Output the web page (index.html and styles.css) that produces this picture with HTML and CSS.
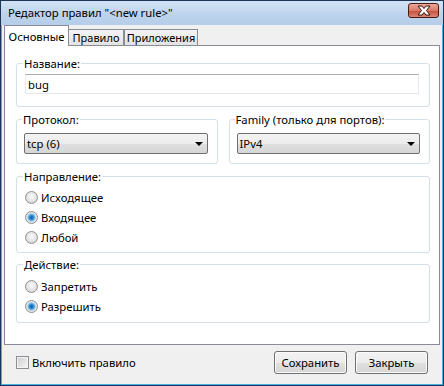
FILE: index.html
```html
<!DOCTYPE html>
<html lang="ru">
<head>
  <meta charset="UTF-8">
  <title>Редактор правил</title>
  <link rel="stylesheet" href="styles.css">
</head>
<body>
  <div class="window">
    <div class="titlebar">
      <span class="title">Редактор правил "&lt;new rule&gt;"</span>
      <button class="close" title="Закрыть">
        <svg width="16" height="11" viewBox="0 0 16 11">
          <path d="M2 1 H6 L8 3.5 L10 1 H14 L10.5 5.5 L14 10 H10 L8 7.5 L6 10 H2 L5.5 5.5 Z" fill="#fff" stroke="#3a1410" stroke-width="1" stroke-linejoin="round"/>
        </svg>
      </button>
    </div>

    <div class="client">
      <div class="tabs">
        <div class="tab active">Основные</div>
        <div class="tab tab-rule">Правило</div>
        <div class="tab tab-apps">Приложения</div>
      </div>

      <div class="panel">
        <fieldset class="group">
          <legend>Название:</legend>
          <input class="textbox" type="text" value="bug">
        </fieldset>

        <div class="row">
          <fieldset class="group half">
            <legend>Протокол:</legend>
            <div class="combo"><span>tcp (6)</span><i class="arrow"></i></div>
          </fieldset>
          <fieldset class="group half">
            <legend>Family (только для портов):</legend>
            <div class="combo"><span>IPv4</span><i class="arrow"></i></div>
          </fieldset>
        </div>

        <fieldset class="group options">
          <legend>Направление:</legend>
          <label class="option"><input type="radio" name="dir"> Исходящее</label>
          <label class="option"><input type="radio" name="dir" checked> Входящее</label>
          <label class="option"><input type="radio" name="dir"> Любой</label>
        </fieldset>

        <fieldset class="group options action">
          <legend>Действие:</legend>
          <label class="option"><input type="radio" name="act"> Запретить</label>
          <label class="option"><input type="radio" name="act" checked> Разрешить</label>
        </fieldset>
      </div>

      <div class="footer">
        <label class="check"><input type="checkbox"> Включить правило</label>
        <div class="buttons">
          <button class="btn">Сохранить</button>
          <button class="btn">Закрыть</button>
        </div>
      </div>
    </div>
  </div>
</body>
</html>
```

FILE: styles.css
```css
body {
  margin: 0;
  font-family: 'Segoe UI', 'Noto Sans', sans-serif;
  font-size: 11.3px;
  line-height: 15px;
  color: #000;
  background: #fff;
}
.window {
  width: 444px;
  height: 386px;
  box-sizing: border-box;
  border: 1px solid #1d3554;
  display: flex;
  flex-direction: column;
  background: #f0f0f0;
}
.titlebar {
  height: 24px;
  flex: none;
  display: flex;
  align-items: center;
  justify-content: space-between;
  padding: 0 4px 0 7px;
  background: linear-gradient(#d2e2f5, #bcd2ec 60%, #b6cdea);
}
.title {
  margin-top: -1px;
}
.close {
  width: 31px;
  height: 15px;
  margin-top: -6px;
  padding: 0;
  border: 1px solid #4a1a14;
  border-radius: 3px;
  background: linear-gradient(#eba999, #d97a68 50%, #c8513c 55%, #d9877a);
  display: flex;
  align-items: center;
  justify-content: center;
}
.client {
  flex: 1;
  display: flex;
  flex-direction: column;
  border: 1px solid #4ab0e6;
  border-top: none;
}
.tabs {
  height: 20px;
  flex: none;
  display: flex;
  align-items: flex-end;
  padding-left: 2px;
}
.tab {
  height: 15px;
  border: 1px solid #898c95;
  border-bottom: none;
  margin-right: -1px;
  background: linear-gradient(#f4f4f4, #e3e3e3);
  line-height: 15px;
  text-align: center;
  white-space: nowrap;
  font-size: 11px;
}
.tab.active {
  width: 63px;
  height: 20px;
  margin-right: -2px;
  margin-bottom: -1px;
  background: #fff;
  position: relative;
  z-index: 1;
  line-height: 21px;
  font-size: 11.3px;
}
.tab-rule {
  width: 54px;
  padding-left: 1px;
}
.tab-apps {
  width: 72px;
  margin-left: 1px;
}
.panel {
  flex: none;
  height: 288px;
  margin: 0 2px;
  padding: 10px 9px 0 11px;
  border: 1px solid #898c95;
  background: #fff;
}
.group {
  margin: 0 0 5px;
  padding: 0 10px 12px 8px;
  border: 1px solid #d5dfe5;
  border-radius: 3px;
  min-width: 0;
}
.group legend {
  margin-left: -2px;
  padding: 0 1px;
}
.textbox {
  display: block;
  width: 100%;
  height: 20px;
  margin-top: 3px;
  box-sizing: border-box;
  border: 1px solid #e3e9ef;
  border-top-color: #abadb3;
  padding: 0 2px;
  font: inherit;
  outline: none;
}
.row {
  display: flex;
  gap: 11px;
}
.half {
  flex: 1;
  padding: 0 9px 9px 7px;
}
.combo {
  height: 19px;
  margin-top: 6px;
  border: 1px solid #707070;
  border-radius: 2px;
  background: linear-gradient(#f3f3f3, #ececec 50%, #e0e0e0 51%, #d6d6d6);
  display: flex;
  align-items: center;
  justify-content: space-between;
  padding: 0 4px 0 2px;
}
.arrow {
  width: 0;
  height: 0;
  border-left: 4px solid transparent;
  border-right: 4px solid transparent;
  border-top: 4px solid #000;
}
.options {
  padding-bottom: 5px;
  margin-bottom: 4px;
}
.option {
  display: flex;
  align-items: center;
  height: 20px;
}
.options legend + .option {
  margin-top: 3px;
}
.action {
  padding-bottom: 6px;
}
.action legend + .option {
  margin-top: 4px;
}
input[type=radio] {
  appearance: none;
  width: 13px;
  height: 13px;
  margin: 0 3px 0 0;
  border: 1px solid #8c8f94;
  border-radius: 50%;
  box-sizing: border-box;
  background: radial-gradient(circle at 50% 40%, #fafafa, #dcdcdc 70%, #cfcfcf);
}
input[type=radio]:checked {
  background: radial-gradient(circle, #1b5b92 0, #2e86cf 2px, #7cc2f0 3.5px, #e2e2e2 4.5px, #f3f3f3);
}
.footer {
  flex: 1;
  display: flex;
  align-items: center;
  justify-content: space-between;
  padding: 0 14px 4px 14px;
}
.check {
  display: flex;
  align-items: center;
}
input[type=checkbox] {
  appearance: none;
  width: 13px;
  height: 13px;
  margin: 0 3px 0 0;
  border: 1px solid #8c8f94;
  box-sizing: border-box;
  background: linear-gradient(135deg, #cdcdcd, #f7f7f7);
  box-shadow: inset 0 0 0 1px #f4f4f4;
}
.buttons {
  display: flex;
  gap: 8px;
}
.btn {
  width: 73px;
  height: 23px;
  border: 1px solid #707070;
  border-radius: 3px;
  background: linear-gradient(#f3f3f3, #ececec 50%, #e0e0e0 51%, #d6d6d6);
  box-shadow: inset 0 0 0 1px #fbfbfb;
  font: inherit;
  padding: 0;
}
```
